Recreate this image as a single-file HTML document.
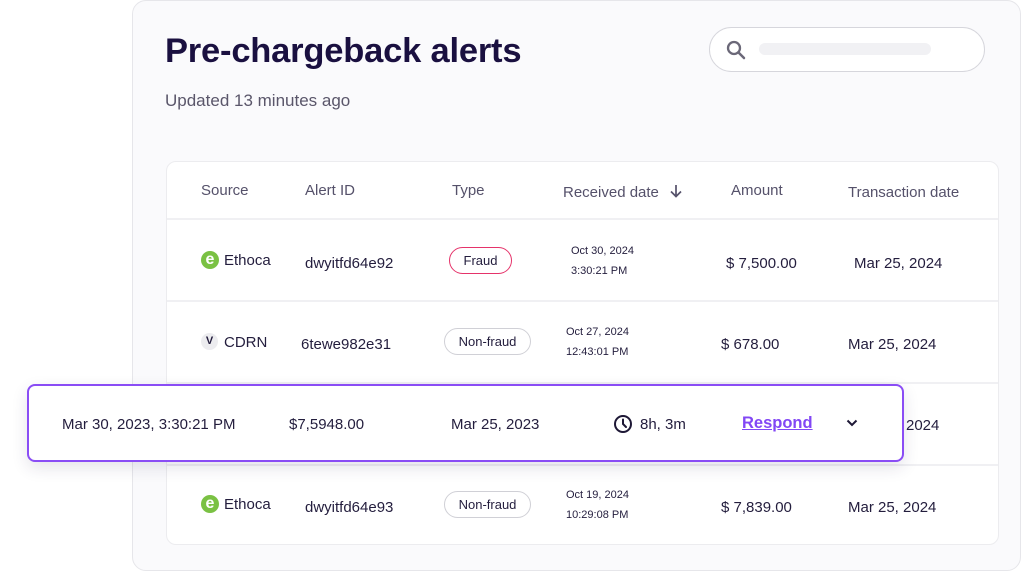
<!DOCTYPE html><html><head><style>
*{margin:0;padding:0;box-sizing:border-box}
body{width:1024px;height:571px;background:#fff;position:relative;overflow:hidden;font-family:"Liberation Sans",sans-serif;color:#231d3d}
.a{position:absolute;white-space:nowrap}
.card{position:absolute;left:132px;top:0;width:889px;height:571px;background:#fafafc;border:1px solid #e6e6ea;border-radius:14px}
.tbl{position:absolute;left:166px;top:161px;width:833px;height:384px;background:#fff;border:1px solid #ececef;border-radius:10px}
.hl{position:absolute;left:167px;width:831px;height:2px;background:#f0f0f3}
.h{font-size:15px;color:#55516a}
.b{font-size:15px}
.s{font-size:11px;line-height:20px}
.pill{position:absolute;height:27px;border-radius:14px;font-size:13px;text-align:center;line-height:25px}
</style></head><body>
<div class="card"></div>
<div class="a" style="left:165px;top:32px;font-size:34.5px;font-weight:bold;color:#1a1040;letter-spacing:-0.2px">Pre-chargeback alerts</div>
<div class="a" style="left:165px;top:91px;font-size:17px;color:#5a566a">Updated 13 minutes ago</div>
<div class="a" style="left:709px;top:27px;width:276px;height:45px;border:1px solid #d6d6dc;border-radius:23px;background:#fff"></div>
<svg class="a" style="left:725px;top:39px" width="22" height="22" viewBox="0 0 22 22"><circle cx="9" cy="9" r="6" fill="none" stroke="#6b6878" stroke-width="2.3"/><path d="M13.5 13.5L19 19" stroke="#6b6878" stroke-width="2.5" stroke-linecap="round"/></svg>
<div class="a" style="left:759px;top:43px;width:172px;height:12px;border-radius:6px;background:#f1f1f4"></div>
<div class="tbl"></div>
<div class="hl" style="top:218px"></div><div class="hl" style="top:300px"></div><div class="hl" style="top:382px"></div><div class="hl" style="top:464px"></div>
<div class="a h" style="left:201px;top:182px">Source</div>
<div class="a h" style="left:305px;top:182px">Alert ID</div>
<div class="a h" style="left:452px;top:182px">Type</div>
<div class="a h" style="left:563px;top:184px">Received date</div>
<svg class="a" style="left:668px;top:183px" width="16" height="16" viewBox="0 0 16 16"><path d="M8 2v11M3 8.5l5 5 5-5" fill="none" stroke="#55516a" stroke-width="1.7"/></svg>
<div class="a h" style="left:731px;top:182px">Amount</div>
<div class="a h" style="left:848px;top:184px">Transaction date</div>
<!-- row1 -->
<div class="a" style="left:201px;top:251px;width:18px;height:18px;border-radius:50%;background:#7ac143;color:#fff;font-size:16px;font-weight:bold;text-align:center;line-height:17px">e</div>
<div class="a b" style="left:224px;top:252px">Ethoca</div>
<div class="a b" style="left:305px;top:255px">dwyitfd64e92</div>
<div class="pill" style="left:449px;top:247px;width:63px;border:1.5px solid #e5336a">Fraud</div>
<div class="a s" style="left:571px;top:241px">Oct 30, 2024<br>3:30:21 PM</div>
<div class="a b" style="left:726px;top:255px">$ 7,500.00</div>
<div class="a b" style="left:854px;top:255px">Mar 25, 2024</div>
<!-- row2 -->
<div class="a" style="left:201px;top:333px;width:17px;height:17px;border-radius:50%;background:#ececef;font-size:11px;font-weight:bold;text-align:center;line-height:17px">V</div>
<div class="a b" style="left:224px;top:334px">CDRN</div>
<div class="a b" style="left:301px;top:336px">6tewe982e31</div>
<div class="pill" style="left:444px;top:328px;width:87px;border:1px solid #d0d0d6">Non-fraud</div>
<div class="a s" style="left:566px;top:322px">Oct 27, 2024<br>12:43:01 PM</div>
<div class="a b" style="left:721px;top:336px">$ 678.00</div>
<div class="a b" style="left:848px;top:336px">Mar 25, 2024</div>
<div class="a b" style="left:906px;top:417px">2024</div>
<!-- row4 -->
<div class="a" style="left:201px;top:495px;width:18px;height:18px;border-radius:50%;background:#7ac143;color:#fff;font-size:16px;font-weight:bold;text-align:center;line-height:17px">e</div>
<div class="a b" style="left:224px;top:496px">Ethoca</div>
<div class="a b" style="left:305px;top:499px">dwyitfd64e93</div>
<div class="pill" style="left:444px;top:491px;width:87px;border:1px solid #d0d0d6">Non-fraud</div>
<div class="a s" style="left:566px;top:485px">Oct 19, 2024<br>10:29:08 PM</div>
<div class="a b" style="left:721px;top:499px">$ 7,839.00</div>
<div class="a b" style="left:848px;top:499px">Mar 25, 2024</div>
<!-- floating -->
<div class="a" style="left:27px;top:384px;width:877px;height:78px;background:#fff;border:2px solid #8a4df5;border-radius:8px;box-shadow:0 6px 16px rgba(40,30,80,0.12)"></div>
<div class="a b" style="left:62px;top:416px">Mar 30, 2023, 3:30:21 PM</div>
<div class="a b" style="left:289px;top:416px">$7,5948.00</div>
<div class="a b" style="left:451px;top:416px">Mar 25, 2023</div>
<svg class="a" style="left:613px;top:414px" width="20" height="20" viewBox="0 0 20 20"><circle cx="10" cy="10" r="8" fill="none" stroke="#1e1836" stroke-width="2"/><path d="M10 5.5V10l3 3" fill="none" stroke="#1e1836" stroke-width="2" stroke-linecap="round"/></svg>
<div class="a b" style="left:640px;top:416px">8h, 3m</div>
<div class="a" style="left:742px;top:414px;font-size:16.5px;font-weight:bold;color:#8247f5;text-decoration:underline">Respond</div>
<svg class="a" style="left:845px;top:417px" width="14" height="12" viewBox="0 0 14 12"><path d="M2.5 3.5L7 8l4.5-4.5" fill="none" stroke="#1e1836" stroke-width="2"/></svg>
</body></html>
